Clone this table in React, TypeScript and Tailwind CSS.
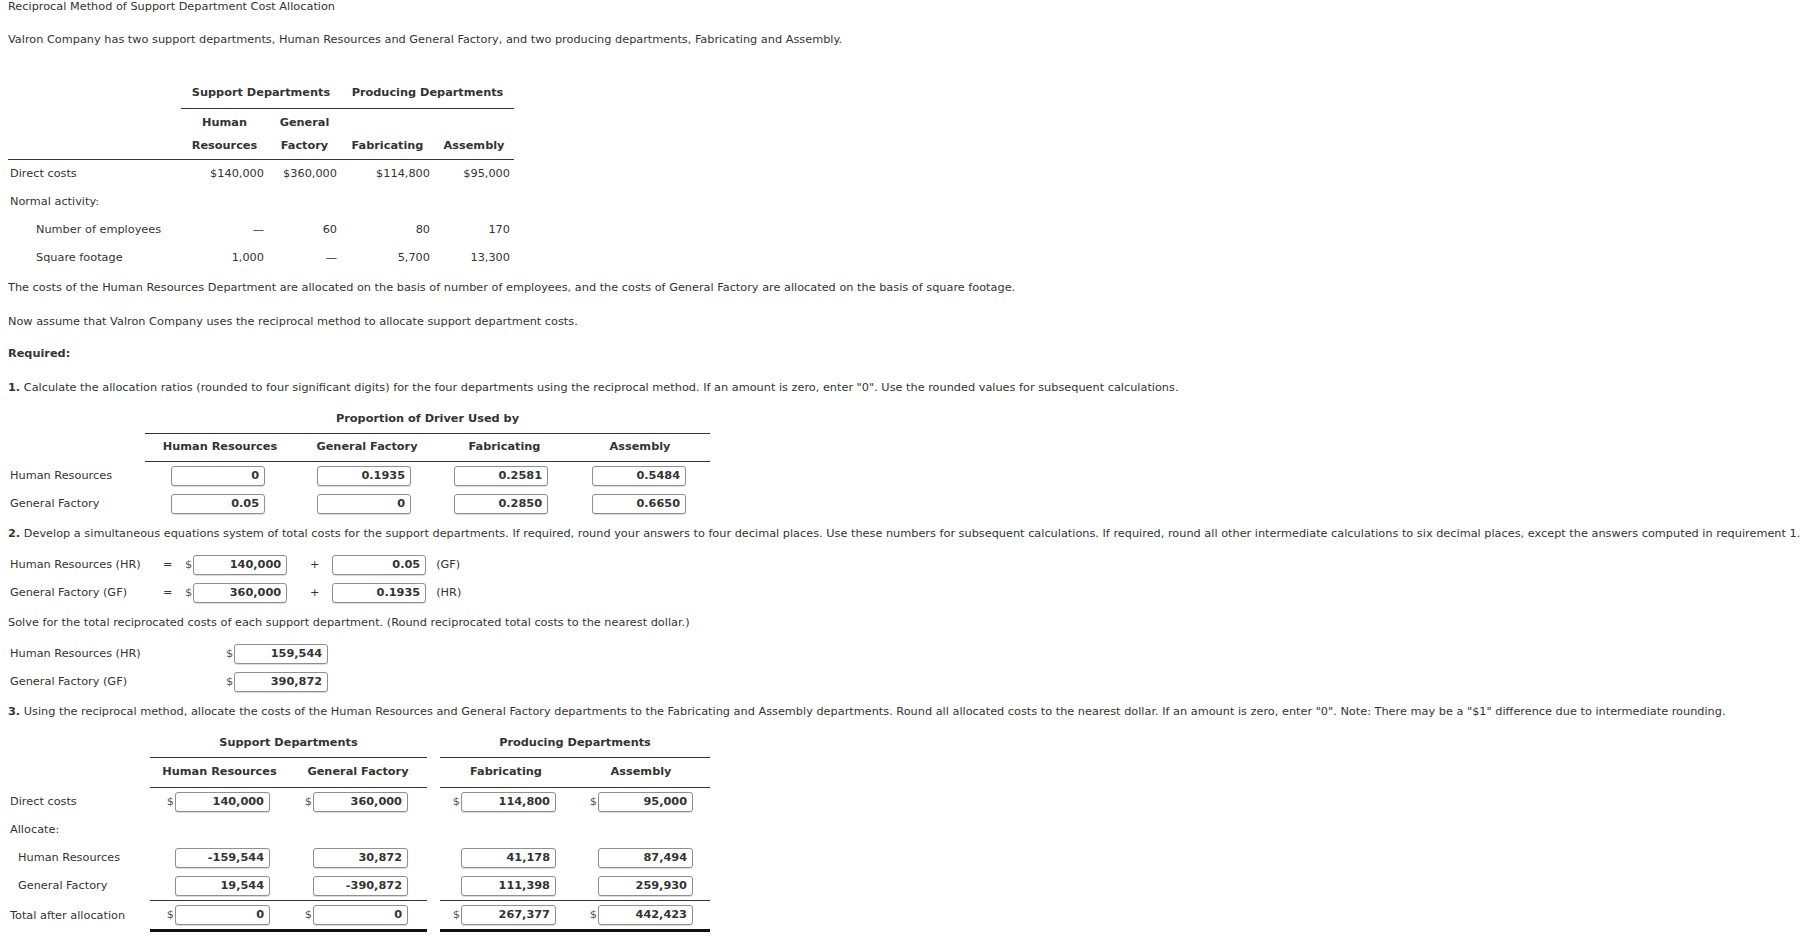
import React from "react";

const Box = ({ v, dollar = false, w = "w-[94px]" }: { v: string; dollar?: boolean; w?: string }) => (
  <div className="flex items-center justify-end">
    {dollar && <span className="mr-[1px] text-[#555]">$</span>}
    <div
      className={
        "flex h-[20px] items-center justify-end rounded-[3px] border border-[#8f8f8f] bg-white pr-[5px] font-bold text-[#333] shadow-[0_1px_1px_rgba(0,0,0,0.15)] " +
        w
      }
    >
      {v}
    </div>
  </div>
);

function Table1() {
  const cols = "grid grid-cols-[173px_87px_73px_93px_80px]";
  return (
    <div className="mt-[29px] w-[506px]">
      <div className={cols}>
        <div />
        <div className="col-span-2 flex h-[30px] items-center justify-center whitespace-nowrap border-b border-[#333] font-bold">
          Support Departments
        </div>
        <div className="col-span-2 flex h-[30px] items-center justify-center whitespace-nowrap border-b border-[#333] font-bold">
          Producing Departments
        </div>
      </div>
      <div className={cols + " border-b border-[#333] pt-[2px] pb-[2px] font-bold leading-[23px]"}>
        <div />
        <div className="text-center">
          Human
          <br />
          Resources
        </div>
        <div className="text-center">
          General
          <br />
          Factory
        </div>
        <div className="text-center">
          <br />
          Fabricating
        </div>
        <div className="text-center">
          <br />
          Assembly
        </div>
      </div>
      {[
        ["Direct costs", "$140,000", "$360,000", "$114,800", "$95,000", false],
        ["Normal activity:", "", "", "", "", false],
        ["Number of employees", "—", "60", "80", "170", true],
        ["Square footage", "1,000", "—", "5,700", "13,300", true],
      ].map((r, i) => (
        <div key={i} className={cols + " h-[28px] items-center"}>
          <div className={r[5] ? "pl-[28px]" : "pl-[2px]"}>{r[0]}</div>
          <div className="pr-[4px] text-right">{r[1]}</div>
          <div className="pr-[4px] text-right">{r[2]}</div>
          <div className="pr-[4px] text-right">{r[3]}</div>
          <div className="pr-[4px] text-right">{r[4]}</div>
        </div>
      ))}
    </div>
  );
}

function Table2() {
  const cols = "grid grid-cols-[137px_150px_144px_131px_140px]";
  const rows = [
    ["Human Resources", "0", "0.1935", "0.2581", "0.5484"],
    ["General Factory", "0.05", "0", "0.2850", "0.6650"],
  ];
  const ml = ["ml-[26px]", "ml-[22px]", "ml-[15px]", "ml-[22px]"];
  return (
    <div className="mt-[8px] w-[702px]">
      <div className={cols}>
        <div />
        <div className="col-span-4 flex h-[28px] items-center justify-center border-b border-[#333] font-bold">
          Proportion of Driver Used by
        </div>
      </div>
      <div className={cols}>
        <div />
        {["Human Resources", "General Factory", "Fabricating", "Assembly"].map((h) => (
          <div key={h} className="flex h-[28px] items-center justify-center border-b border-[#333] font-bold">
            {h}
          </div>
        ))}
      </div>
      {rows.map((r) => (
        <div key={r[0]} className={cols + " h-[28px] items-center"}>
          <div className="pl-[2px]">{r[0]}</div>
          {r.slice(1).map((v, i) => (
            <div key={i} className={"flex justify-start " + ml[i]}>
              <Box v={v} />
            </div>
          ))}
        </div>
      ))}
    </div>
  );
}

function EqRow({ label, a, b, tag }: { label: string; a: string; b: string; tag: string }) {
  return (
    <div className="flex h-[28px] items-center">
      <div className="w-[155px] pl-[2px]">{label}</div>
      <div className="w-[22px]">=</div>
      <Box v={a} dollar />
      <div className="w-[45px] pl-[10px] text-center">+</div>
      <Box v={b} />
      <div className="pl-[10px]">{tag}</div>
    </div>
  );
}

function SolveRow({ label, v }: { label: string; v: string }) {
  return (
    <div className="flex h-[28px] items-center">
      <div className="w-[218px] pl-[2px]">{label}</div>
      <Box v={v} dollar />
    </div>
  );
}

function Table3() {
  const cols = "grid grid-cols-[142px_139px_138px_13px_132px_138px]";
  const line = "border-b border-[#333]";
  const pr = ["pr-[19px]", "pr-[19px]", "pr-[16px]", "pr-[17px]"];
  const cell = (v: string, dollar: boolean, i: number, extra = "") => (
    <div className={"flex h-full items-center justify-end " + pr[i] + " " + extra}>
      <Box v={v} dollar={dollar} w="w-[95px]" />
    </div>
  );
  const dataRow = (
    label: string,
    vals: string[],
    dollar: boolean,
    indent: boolean,
    extra = "",
    h = "h-[28px]"
  ) => (
    <div className={cols + " " + h}>
      <div className={"flex items-center " + (indent ? "pl-[10px]" : "pl-[2px]")}>{label}</div>
      {cell(vals[0], dollar, 0, extra)}
      {cell(vals[1], dollar, 1, extra)}
      <div />
      {cell(vals[2], dollar, 2, extra)}
      {cell(vals[3], dollar, 3, extra)}
    </div>
  );
  return (
    <div className="mt-[7px] w-[702px]">
      <div className={cols + " h-[29px]"}>
        <div />
        <div className={"col-span-2 flex items-center justify-center font-bold " + line}>Support Departments</div>
        <div />
        <div className={"col-span-2 flex items-center justify-center font-bold " + line}>Producing Departments</div>
      </div>
      <div className={cols + " h-[30px]"}>
        <div />
        <div className={"flex items-center justify-center font-bold " + line}>Human Resources</div>
        <div className={"flex items-center justify-center font-bold " + line}>General Factory</div>
        <div />
        <div className={"flex items-center justify-center font-bold " + line}>Fabricating</div>
        <div className={"flex items-center justify-center font-bold " + line}>Assembly</div>
      </div>
      {dataRow("Direct costs", ["140,000", "360,000", "114,800", "95,000"], true, false)}
      <div className="flex h-[28px] items-center pl-[2px]">Allocate:</div>
      {dataRow("Human Resources", ["-159,544", "30,872", "41,178", "87,494"], false, true)}
      {dataRow("General Factory", ["19,544", "-390,872", "111,398", "259,930"], false, true, line, "h-[29px]")}
      {dataRow(
        "Total after allocation",
        ["0", "0", "267,377", "442,423"],
        true,
        false,
        "border-b-[3px] border-[#111]",
        "h-[31px]"
      )}
    </div>
  );
}

export default function App() {
  return (
    <div className="min-h-[943px] w-[1810px] bg-white pt-[1px] pl-[8px] text-[11.3px] text-[#333] [font-family:'DejaVu_Sans',Verdana,sans-serif]">
      <div className="h-[12px] leading-[12px]">Reciprocal Method of Support Department Cost Allocation</div>
      <div className="mt-[17px] h-[20px] leading-[20px]">
        Valron Company has two support departments, Human Resources and General Factory, and two producing
        departments, Fabricating and Assembly.
      </div>
      <Table1 />
      <div className="mt-[6px] h-[20px] leading-[20px]">
        The costs of the Human Resources Department are allocated on the basis of number of employees, and the costs
        of General Factory are allocated on the basis of square footage.
      </div>
      <div className="mt-[14px] h-[20px] leading-[20px]">
        Now assume that Valron Company uses the reciprocal method to allocate support department costs.
      </div>
      <div className="mt-[12px] h-[20px] font-bold leading-[20px]">Required:</div>
      <div className="mt-[14px] h-[20px] leading-[20px]">
        <b>1.</b> Calculate the allocation ratios (rounded to four significant digits) for the four departments using
        the reciprocal method. If an amount is zero, enter "0". Use the rounded values for subsequent calculations.
      </div>
      <Table2 />
      <div className="mt-[6px] h-[20px] whitespace-nowrap leading-[20px]">
        <b>2.</b> Develop a simultaneous equations system of total costs for the support departments. If required,
        round your answers to four decimal places. Use these numbers for subsequent calculations. If required, round
        all other intermediate calculations to six decimal places, except the answers computed in requirement 1.
      </div>
      <div className="mt-[7px]">
        <EqRow label="Human Resources (HR)" a="140,000" b="0.05" tag="(GF)" />
        <EqRow label="General Factory (GF)" a="360,000" b="0.1935" tag="(HR)" />
      </div>
      <div className="mt-[6px] h-[20px] leading-[20px]">
        Solve for the total reciprocated costs of each support department. (Round reciprocated total costs to the
        nearest dollar.)
      </div>
      <div className="mt-[7px]">
        <SolveRow label="Human Resources (HR)" v="159,544" />
        <SolveRow label="General Factory (GF)" v="390,872" />
      </div>
      <div className="mt-[6px] h-[20px] whitespace-nowrap leading-[20px]">
        <b>3.</b> Using the reciprocal method, allocate the costs of the Human Resources and General Factory
        departments to the Fabricating and Assembly departments. Round all allocated costs to the nearest dollar. If
        an amount is zero, enter "0". Note: There may be a "$1" difference due to intermediate rounding.
      </div>
      <Table3 />
    </div>
  );
}
